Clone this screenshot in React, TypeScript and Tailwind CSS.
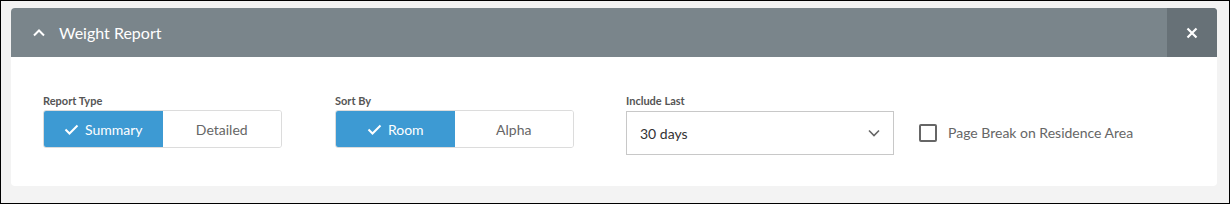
import { useState } from 'react'

const FONT = { fontFamily: 'Lato, "Open Sans", "Liberation Sans", sans-serif' }

function Check() {
  return (
    <svg width="15" height="11" viewBox="0 0 15 11" fill="none" className="mr-[6px]">
      <path d="M1.5 5.5 L5.5 9.5 L13.5 1.5" stroke="white" strokeWidth="2" />
    </svg>
  )
}

interface SegProps {
  label: string
  options: [string, string]
  value: string
  onChange: (v: string) => void
}

function Segmented({ label, options, value, onChange }: SegProps) {
  return (
    <div className="w-[239px]">
      <div className="text-[11px] leading-[13px] font-bold text-[#555] mb-[3px]">{label}</div>
      <div className="flex h-[38px] rounded-[3px] border border-[#dcdcdc] overflow-hidden">
        {options.map(opt => {
          const active = opt === value
          return (
            <button
              key={opt}
              onClick={() => onChange(opt)}
              className={
                active
                  ? 'flex-1 flex items-center justify-center bg-[#3d9ad3] text-white text-[14px] -m-px border border-[#3a8fc4]'
                  : 'flex-1 flex items-center justify-center bg-white text-[#666] text-[14px]'
              }
            >
              {active && <Check />}
              {opt}
            </button>
          )
        })}
      </div>
    </div>
  )
}

export default function App() {
  const [reportType, setReportType] = useState('Summary')
  const [sortBy, setSortBy] = useState('Room')
  const [pageBreak, setPageBreak] = useState(false)

  return (
    <div style={FONT} className="w-[1230px] h-[204px] border border-black bg-[#f3f3f3] pt-[7px] pl-[10px] pr-[12px]">
      <div className="bg-white rounded-[4px] overflow-hidden">
        <div className="h-[49px] flex items-center bg-[#7a858b]">
          <svg width="12" height="8" viewBox="0 0 12 8" fill="none" className="ml-[22px]">
            <path d="M1 6.5 L6 1.5 L11 6.5" stroke="white" strokeWidth="2" />
          </svg>
          <span className="ml-[14px] text-[16px] text-white">Weight Report</span>
          <button className="ml-auto w-[50px] h-full bg-[#677177] flex items-center justify-center">
            <svg width="12" height="12" viewBox="0 0 12 12" fill="none">
              <path d="M1.5 1.5 L10.5 10.5 M10.5 1.5 L1.5 10.5" stroke="white" strokeWidth="2.2" />
            </svg>
          </button>
        </div>

        <div className="flex items-start pt-[37px] pb-[31px] pl-[32px]">
          <Segmented label="Report Type" options={['Summary', 'Detailed']} value={reportType} onChange={setReportType} />
          <div className="ml-[53px]">
            <Segmented label="Sort By" options={['Room', 'Alpha']} value={sortBy} onChange={setSortBy} />
          </div>
          <div className="ml-[52px] w-[268px]">
            <div className="text-[11px] leading-[13px] font-bold text-[#555] mb-[4px]">Include Last</div>
            <div className="h-[44px] border border-[#c8c8c8] flex items-center pl-[13px] pr-[13px]">
              <span className="text-[14px] text-[#333]">30 days</span>
              <svg width="12" height="8" viewBox="0 0 12 8" fill="none" className="ml-auto">
                <path d="M1 1.5 L6 6.5 L11 1.5" stroke="#666" strokeWidth="1.6" />
              </svg>
            </div>
          </div>
          <label className="ml-[25px] mt-[28px] flex items-center cursor-pointer">
            <span
              onClick={() => setPageBreak(!pageBreak)}
              className="w-[18px] h-[18px] rounded-[2px] border-2 border-[#666] bg-white"
            />
            <span className="ml-[11px] text-[14px] text-[#666]">Page Break on Residence Area</span>
          </label>
        </div>
      </div>
    </div>
  )
}
